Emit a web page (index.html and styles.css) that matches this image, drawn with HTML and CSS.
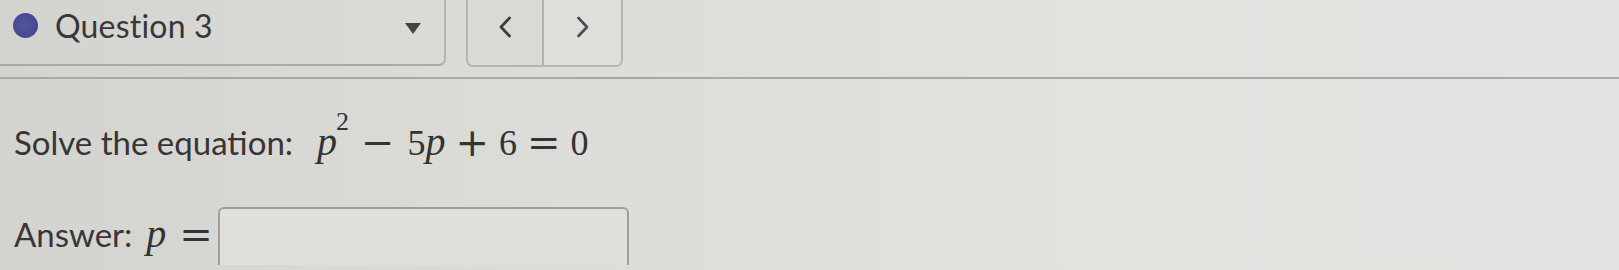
FILE: index.html
```html
<!DOCTYPE html>
<html>
<head>
<meta charset="utf-8">
<link rel="stylesheet" href="styles.css">
</head>
<body>
<div class="page">
  <header class="topbar">
    <div class="select">
      <span class="dot"></span>
      <span class="qtitle">Question 3</span>
      <span class="caret"></span>
    </div>
    <div class="nav">
      <div class="navbtn prev">
        <svg width="18" height="24" viewBox="0 0 18 24"><path d="M13.5 3 L5 12 L13.5 21" fill="none" stroke="#3f3b40" stroke-width="2.8" stroke-linecap="round" stroke-linejoin="round"/></svg>
      </div>
      <div class="navbtn next">
        <svg width="18" height="24" viewBox="0 0 18 24"><path d="M4.5 3 L13 12 L4.5 21" fill="none" stroke="#4d4a50" stroke-width="2.6" stroke-linecap="round" stroke-linejoin="round"/></svg>
      </div>
    </div>
  </header>
  <div class="rule"></div>
  <main class="content">
    <p class="question">Solve the equation:<span class="math"><i>p</i><sup>2</sup><span class="op">−</span>5<i>p</i><span class="op">+</span>6<span class="op">=</span>0</span></p>
    <div class="answer">
      <span class="label">Answer:<span class="math"><i>p</i><span class="op eq">=</span></span></span>
      <div class="inputbox"></div>
    </div>
  </main>
</div>
</body>
</html>
```
FILE: styles.css
```css
html, body {
  margin: 0;
  padding: 0;
}
body {
  width: 1619px;
  height: 270px;
  overflow: hidden;
  background: linear-gradient(90deg, #d3d3cf 0%, #dcdcd8 35%, #e2e2df 70%, #e3e3e1 100%);
  font-family: Lato, "Open Sans", sans-serif;
  color: #3a3638;
}
.page {
  display: flex;
  flex-direction: column;
}
.topbar {
  display: flex;
  height: 67px;
  gap: 20px;
}
.select {
  width: 446px;
  height: 66px;
  box-sizing: border-box;
  border-right: 2px solid #b4b4b1;
  border-bottom: 2px solid #a9a9a6;
  border-bottom-right-radius: 7px;
  display: flex;
  align-items: center;
  padding: 0 23px 14px 13px;
}
.dot {
  width: 25px;
  height: 25px;
  border-radius: 50%;
  background: radial-gradient(circle at 45% 45%, #5252a0 0%, #4a4a92 60%, #3c3c74 100%);
  flex: none;
}
.qtitle {
  font-size: 32px;
  margin-left: 17px;
  letter-spacing: 0.2px;
  color: #3b3538;
}
.caret {
  margin-left: auto;
  width: 0;
  height: 0;
  border-left: 8px solid transparent;
  border-right: 8px solid transparent;
  border-top: 11px solid #444246;
  margin-top: 6px;
}
.nav {
  display: flex;
  width: 157px;
  height: 67px;
  box-sizing: border-box;
  border: 2px solid #b5b5b2;
  border-top: none;
  border-radius: 0 0 7px 7px;
  overflow: hidden;
}
.navbtn {
  display: flex;
  justify-content: center;
  align-items: flex-start;
  padding-top: 15px;
}
.prev {
  width: 74px;
  border-right: 2px solid #b2b2af;
  background: #d9d9d5;
}
.next {
  flex: 1;
  background: #dededb;
}
.rule {
  height: 2px;
  margin-top: 10px;
  background: #a8a8a6;
}
.content {
  padding-left: 14px;
}
.question {
  margin: 41px 0 0;
  font-size: 33px;
  line-height: 44px;
  color: #383435;
}
.math {
  font-family: "Liberation Serif", serif;
  font-size: 36px;
  color: #333;
}
.math i {
  font-size: 40px;
}
.math sup {
  font-size: 26px;
  vertical-align: 25px;
  line-height: 0;
  margin-left: -1px;
}
.op {
  font-family: "DejaVu Serif", serif;
  font-size: 40px;
  line-height: 0;
  vertical-align: -1px;
  margin: 0 10px;
}
.question .math {
  margin-left: 24px;
}
.question .op:first-of-type {
  margin: 0 13px 0 12px;
}
.answer {
  display: flex;
  align-items: flex-start;
  margin-top: 42px;
}
.label {
  font-size: 33px;
  line-height: 44px;
  margin-top: 5px;
}
.label .math {
  margin-left: 14px;
}
.label .op.eq {
  margin: 0 0 0 13px;
}
.inputbox {
  width: 411px;
  height: 58px;
  margin-left: 5px;
  box-sizing: border-box;
  border: 2px solid #9e9e9c;
  border-bottom: none;
  border-radius: 6px 6px 0 0;
  background: #dfdfdc;
}
```
